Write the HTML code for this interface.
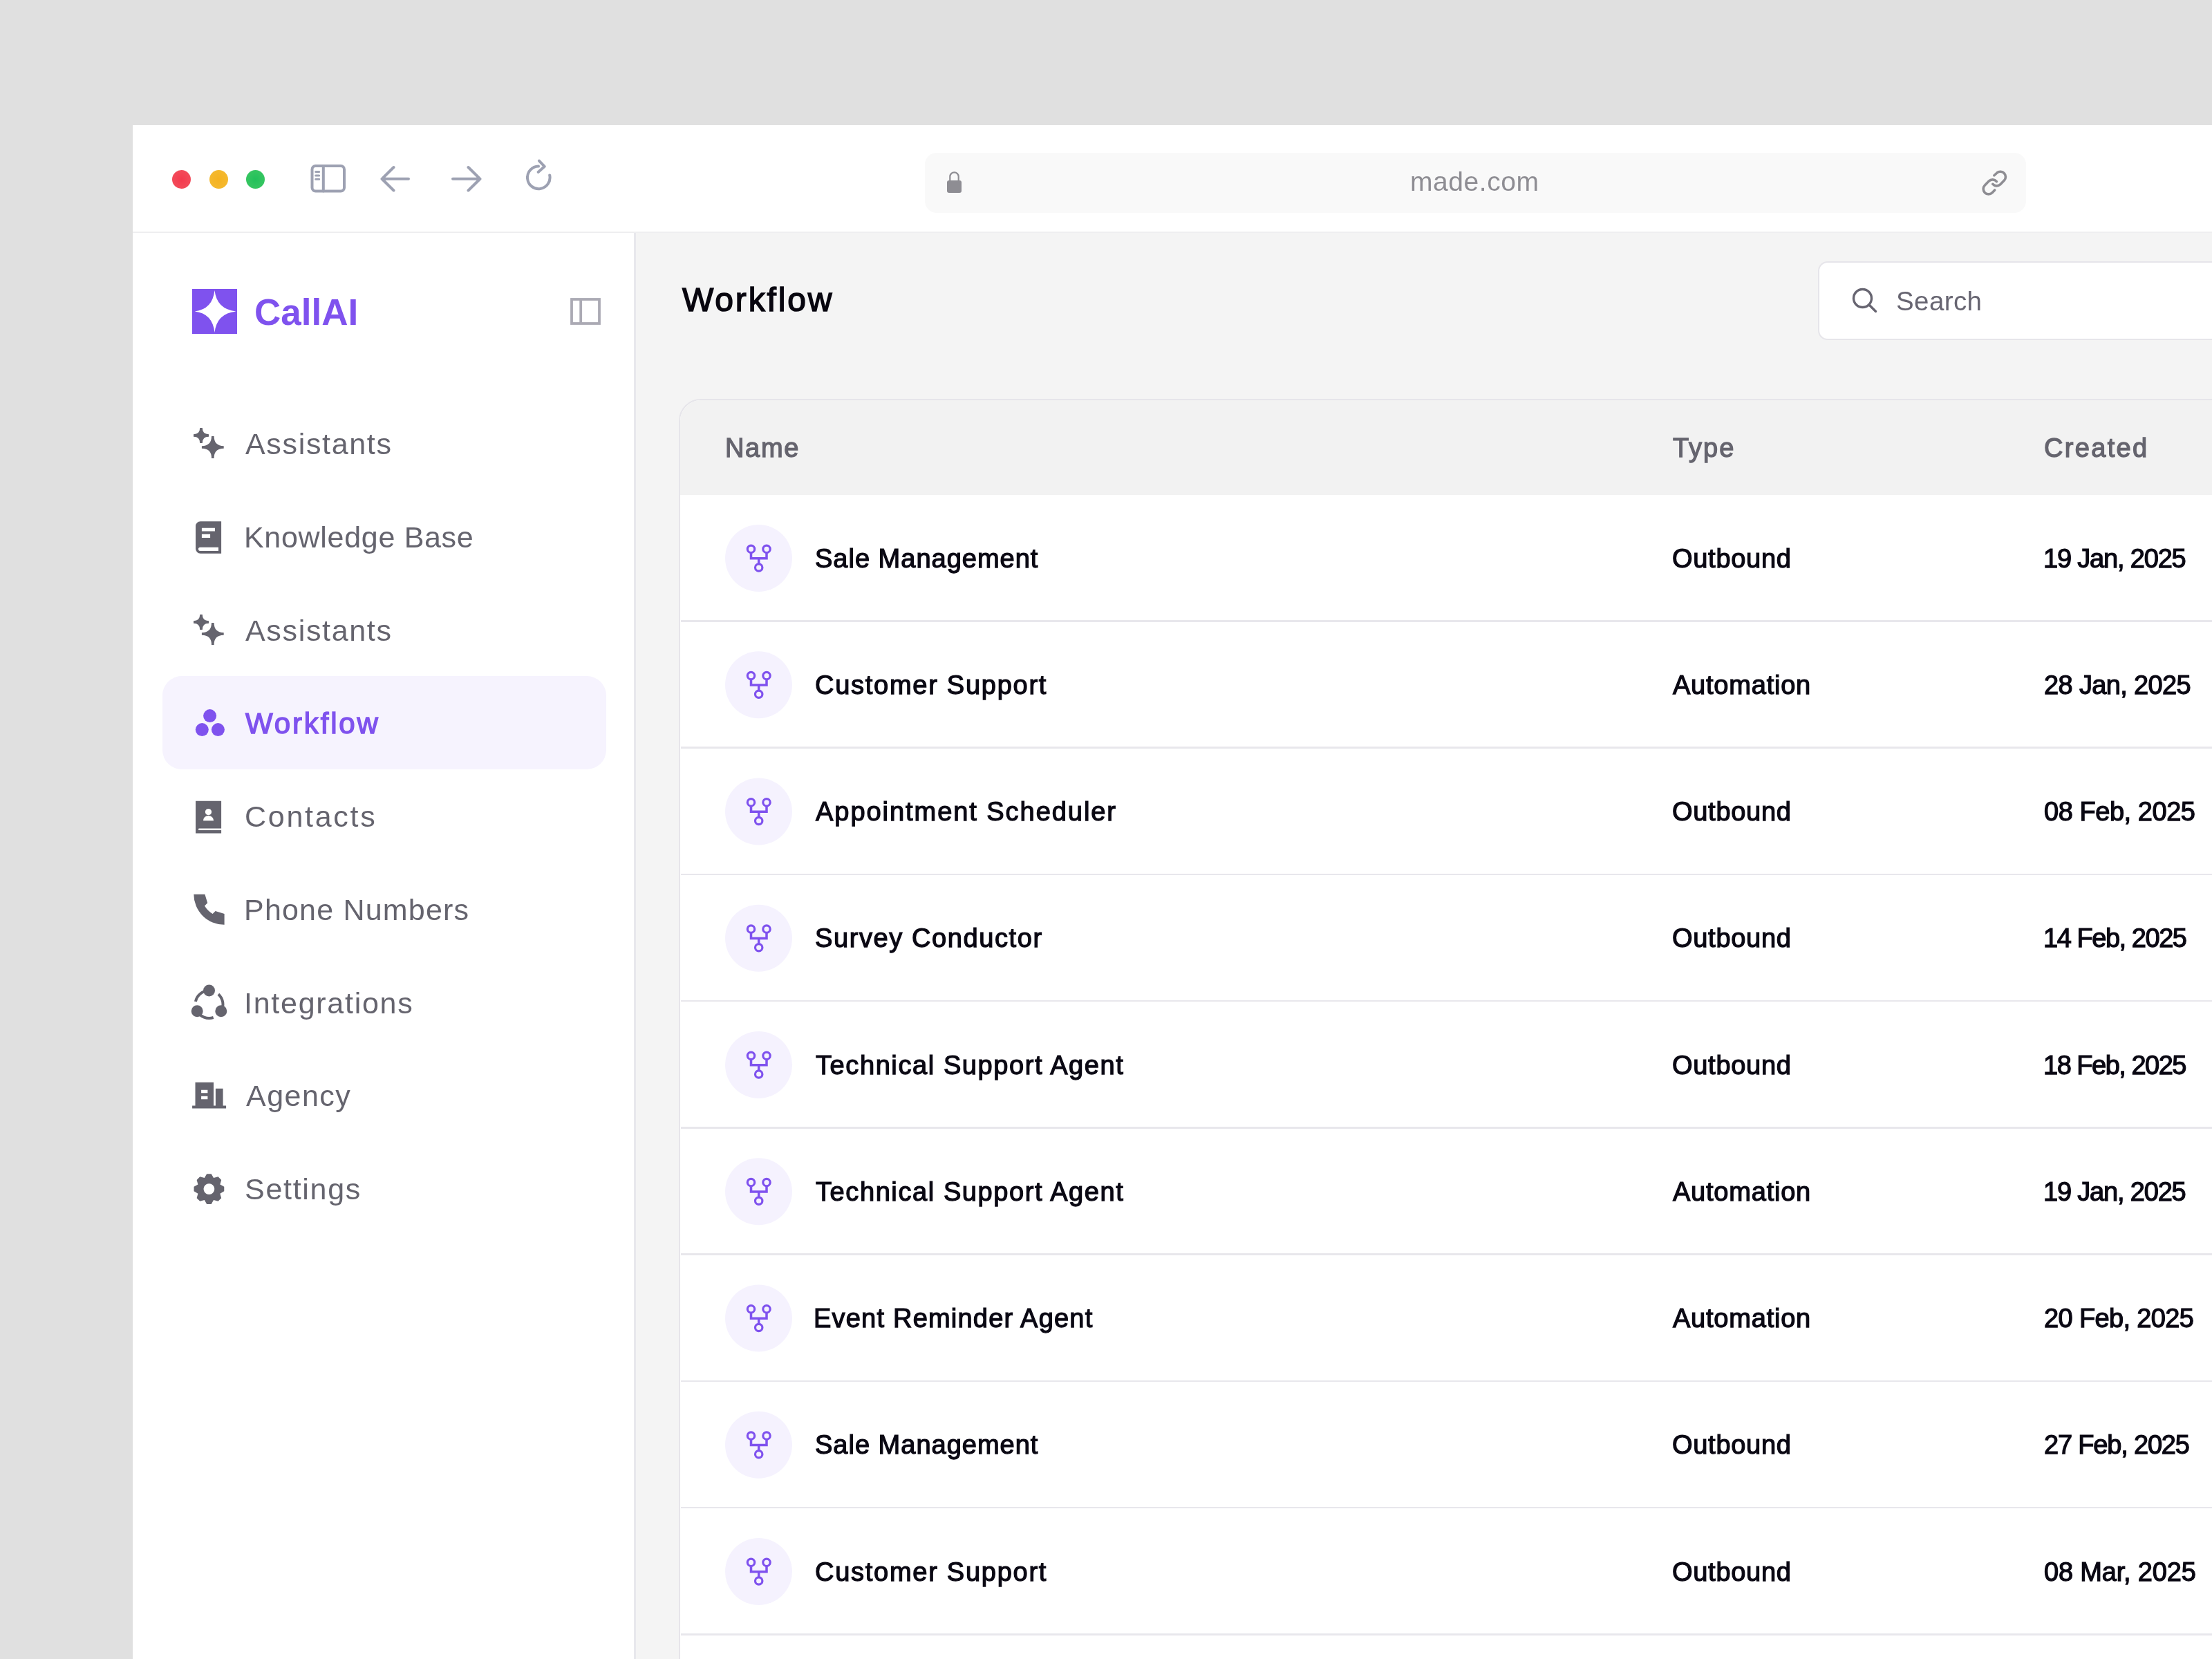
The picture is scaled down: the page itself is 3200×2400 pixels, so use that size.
<!DOCTYPE html>
<html><head><meta charset="utf-8"><style>
*{margin:0;padding:0;box-sizing:border-box}
html,body{width:3200px;height:2400px;overflow:hidden;background:#E0E0E0;font-family:"Liberation Sans", sans-serif}
.t{position:absolute;will-change:transform;white-space:nowrap;line-height:normal;font-family:"Liberation Sans", sans-serif}
.abs{position:absolute}
svg.full{position:absolute;left:0;top:0;width:3200px;height:2400px;overflow:visible}
</style></head><body>
<div class="abs" style="left:192px;top:181px;width:3008px;height:2219px;background:#fff"></div>
<div class="abs" style="left:192px;top:335px;width:3008px;height:2px;background:#EEEEF0"></div>
<div class="abs" style="left:917px;top:337px;width:2.8px;height:2063px;background:#E8E8EC"></div>
<div class="abs" style="left:919.8px;top:337px;width:2281px;height:2063px;background:#F4F4F4"></div>
<div class="abs" style="left:249px;top:245.5px;width:27px;height:27px;border-radius:50%;background:radial-gradient(circle,#F43A4E 0%,#F2525F 100%)"></div>
<div class="abs" style="left:302.5px;top:245.5px;width:27px;height:27px;border-radius:50%;background:radial-gradient(circle,#F5B220 0%,#F4BC35 100%)"></div>
<div class="abs" style="left:356px;top:245.5px;width:27px;height:27px;border-radius:50%;background:radial-gradient(circle,#22C05A 0%,#3FC864 100%)"></div>
<div class="abs" style="left:1337.5px;top:221px;width:1593.5px;height:87px;border-radius:17px;background:#F9F9F9"></div>
<div class="abs" style="left:235px;top:978px;width:642px;height:135px;border-radius:28px;background:#F6F3FE"></div>
<div class="abs" style="left:2629.8px;top:377.6px;width:700px;height:114.5px;border-radius:14px;background:#fff;border:2.5px solid #E6E5EA"></div>
<div class="abs" style="left:982px;top:577px;width:2400px;height:1900px;border-radius:32px;background:#fff;border:2.6px solid #E6E5EA;overflow:hidden">
  <div class="abs" style="left:0;top:0;width:2400px;height:137px;background:#F2F2F2"></div>
</div>
<div style="position:absolute;left:984.5px;top:897.20px;width:2300px;height:2.5px;background:#E8E7EC"></div><div style="position:absolute;left:984.5px;top:1080.45px;width:2300px;height:2.5px;background:#E8E7EC"></div><div style="position:absolute;left:984.5px;top:1263.70px;width:2300px;height:2.5px;background:#E8E7EC"></div><div style="position:absolute;left:984.5px;top:1446.95px;width:2300px;height:2.5px;background:#E8E7EC"></div><div style="position:absolute;left:984.5px;top:1630.20px;width:2300px;height:2.5px;background:#E8E7EC"></div><div style="position:absolute;left:984.5px;top:1813.45px;width:2300px;height:2.5px;background:#E8E7EC"></div><div style="position:absolute;left:984.5px;top:1996.70px;width:2300px;height:2.5px;background:#E8E7EC"></div><div style="position:absolute;left:984.5px;top:2179.95px;width:2300px;height:2.5px;background:#E8E7EC"></div><div style="position:absolute;left:984.5px;top:2363.20px;width:2300px;height:2.5px;background:#E8E7EC"></div>
<svg class="full" viewBox="0 0 3200 2400">

<g fill="none" stroke="#9DA1B2" stroke-width="4" stroke-linecap="round" stroke-linejoin="round">
<rect x="451.5" y="240" width="46.5" height="36.5" rx="5"/>
<path d="M467.8,240 V276.5"/>
<path d="M456.7,248.5 H461.7 M456.7,254 H461.7 M456.7,259.3 H461.7" stroke-width="3"/>
<path d="M591,258.8 H553.5 M569.5,242 L552.5,258.8 L569.5,275.5"/>
<path d="M655,258.8 H693.5 M677.5,242 L694.5,258.8 L677.5,275.5"/>
<path d="M795.2,253.5 A16.3 16.3 0 1 1 779,240.6"/><path d="M779.9,232.6 L787.8,240.8 L778.6,249"/>
</g>

<g fill="#8E8D93"><rect x="1370" y="261" width="21" height="18" rx="3"/></g>
<path d="M1374.3,262 V255.5 A6.2 6.2 0 0 1 1386.7,255.5 V262" fill="none" stroke="#8E8D93" stroke-width="2.2"/>
<g fill="none" stroke="#8E8D93" stroke-width="3.6" stroke-linecap="round">
<path d="M2884.9,253.8 L2889,250 A7.6 7.6 0 0 1 2899.6,260.8 L2893.6,266.9 A7.6 7.6 0 0 1 2882.8,266.3"/>
<path d="M2888.4,262.6 A7.6 7.6 0 0 0 2877.2,262.1 L2871.4,267.9 A7.6 7.6 0 0 0 2882.1,278.7 L2885.7,275"/>
</g>
<rect x="278" y="418" width="65" height="65" fill="#7F52EE"/>
<path fill="#fff" d="M310.5,420 Q313.5,447.4 341.4,450.4 Q313.5,453.4 310.5,481 Q307.5,453.4 281.7,450.4 Q307.5,447.4 310.5,420 Z"/>
<g fill="none" stroke="#ABAAB4" stroke-width="3.8"><rect x="827" y="433" width="40" height="35"/><path d="M840.2,433 V468"/></g>
<g fill="#65646E"><path d="M289.2,619 L292.8,619 Q292.8,628.2 302,628.2 L302,631.8 Q292.8,631.8 292.8,641 L289.2,641 Q289.2,631.8 280,631.8 L280,628.2 Q289.2,628.2 289.2,619 Z M306.0,631.1 L309.6,631.1 Q309.6,645.2 323.7,645.2 L323.7,648.8 Q309.6,648.8 309.6,662.9 L306.0,662.9 Q306.0,648.8 291.90000000000003,648.8 L291.90000000000003,645.2 Q306.0,645.2 306.0,631.1 Z"/><path fill-rule="evenodd" d="M290,754.3 H320.1 V800.8 H290 A7 7 0 0 1 283,793.8 V761.3 A7 7 0 0 1 290,754.3 Z M291.9,763.8 H311 V768.5 H291.9 Z M291.9,772.8 H304.1 V777.9 H291.9 Z M289.5,791.8 H316 V796.9 H289.5 A2.55 2.55 0 0 1 289.5,791.8 Z"/><path d="M289.2,889 L292.8,889 Q292.8,898.2 302,898.2 L302,901.8 Q292.8,901.8 292.8,911 L289.2,911 Q289.2,901.8 280,901.8 L280,898.2 Q289.2,898.2 289.2,889 Z M306.0,901.1 L309.6,901.1 Q309.6,915.2 323.7,915.2 L323.7,918.8 Q309.6,918.8 309.6,932.9 L306.0,932.9 Q306.0,918.8 291.90000000000003,918.8 L291.90000000000003,915.2 Q306.0,915.2 306.0,901.1 Z"/><circle cx="303.6" cy="1035.6" r="9.5" fill="#7F52EE"/><circle cx="292.3" cy="1055.6" r="9.5" fill="#7F52EE"/><circle cx="315.4" cy="1055.6" r="9.5" fill="#7F52EE"/><path fill-rule="evenodd" d="M283,1158.8 H320.1 V1198.6 H288.2 A1.25 1.25 0 0 0 288.2,1201.1 H320.1 V1205.6 H283 Z M301.5,1170 A4.6 4.6 0 1 1 301.49,1170 Z M294.1,1187.2 C294.1,1183 297.4,1180 301.5,1180 C305.6,1180 309,1183 309,1187.2 Z"/><path d="M280.3,1293.7 L296.4,1293.7 L300.2,1306.3 L296,1310.5 A33 33 0 0 0 307.6,1322 L311.6,1318.1 L324.6,1322 L324.6,1337.7 A44 44 0 0 1 280.3,1293.7 Z"/><path fill="none" stroke="#65646E" stroke-width="4" d="M302.50,1433.00 A20,20 0 0 0 282.94,1448.84 M285.06,1462.79 A20,20 0 0 0 308.68,1472.02 M319.94,1462.79 A20,20 0 0 0 315.88,1438.14"/><circle cx="302.5" cy="1433" r="8.5"/><circle cx="285.2" cy="1462.7" r="8.5"/><circle cx="319.8" cy="1462.7" r="8.5"/><path fill-rule="evenodd" d="M282.5,1565.7 H309 V1599.5 H311.9 V1574.7 H322.6 V1599.5 H327.1 V1603.6 H278.1 V1599.5 H282.5 Z M291.1,1576.7 H300.4 V1581.2 H291.1 Z M291.1,1585.7 H300.4 V1590.2 H291.1 Z"/><path fill-rule="evenodd" d="M299.13,1698.24 L305.67,1698.24 L309.02,1704.12 L315.55,1702.33 L320.17,1706.95 L318.38,1713.48 L324.26,1716.83 L324.26,1723.37 L318.38,1726.72 L320.17,1733.25 L315.55,1737.87 L309.02,1736.08 L305.67,1741.96 L299.13,1741.96 L295.78,1736.08 L289.25,1737.87 L284.63,1733.25 L286.42,1726.72 L280.54,1723.37 L280.54,1716.83 L286.42,1713.48 L284.63,1706.95 L289.25,1702.33 L295.78,1704.12 Z M310.29999999999995,1720.1 A7.9,7.9 0 1 0 294.5,1720.1 A7.9,7.9 0 1 0 310.29999999999995,1720.1 Z"/></g>
<g fill="none" stroke="#676571" stroke-width="3.4" stroke-linecap="round"><circle cx="2694.5" cy="431.5" r="13"/><path d="M2704,441 L2713.5,450.5"/></g>
<circle cx="1097.5" cy="807.5" r="48.5" fill="#F5F2FE"/><g fill="none" stroke="#7F52EE" stroke-width="3.2"><circle cx="1086.5" cy="794.3" r="5.2"/><circle cx="1109.0" cy="794.3" r="5.2"/><circle cx="1097.7" cy="821.0" r="5.2"/><path d="M1086.5,799.5 V807.8 H1109.0 V799.5 M1097.7,807.8 V815.8" stroke-linejoin="miter" stroke-width="3.5"/></g><circle cx="1097.5" cy="990.75" r="48.5" fill="#F5F2FE"/><g fill="none" stroke="#7F52EE" stroke-width="3.2"><circle cx="1086.5" cy="977.55" r="5.2"/><circle cx="1109.0" cy="977.55" r="5.2"/><circle cx="1097.7" cy="1004.25" r="5.2"/><path d="M1086.5,982.75 V991.05 H1109.0 V982.75 M1097.7,991.05 V999.05" stroke-linejoin="miter" stroke-width="3.5"/></g><circle cx="1097.5" cy="1174.0" r="48.5" fill="#F5F2FE"/><g fill="none" stroke="#7F52EE" stroke-width="3.2"><circle cx="1086.5" cy="1160.8" r="5.2"/><circle cx="1109.0" cy="1160.8" r="5.2"/><circle cx="1097.7" cy="1187.5" r="5.2"/><path d="M1086.5,1166.0 V1174.3 H1109.0 V1166.0 M1097.7,1174.3 V1182.3" stroke-linejoin="miter" stroke-width="3.5"/></g><circle cx="1097.5" cy="1357.25" r="48.5" fill="#F5F2FE"/><g fill="none" stroke="#7F52EE" stroke-width="3.2"><circle cx="1086.5" cy="1344.05" r="5.2"/><circle cx="1109.0" cy="1344.05" r="5.2"/><circle cx="1097.7" cy="1370.75" r="5.2"/><path d="M1086.5,1349.25 V1357.55 H1109.0 V1349.25 M1097.7,1357.55 V1365.55" stroke-linejoin="miter" stroke-width="3.5"/></g><circle cx="1097.5" cy="1540.5" r="48.5" fill="#F5F2FE"/><g fill="none" stroke="#7F52EE" stroke-width="3.2"><circle cx="1086.5" cy="1527.3" r="5.2"/><circle cx="1109.0" cy="1527.3" r="5.2"/><circle cx="1097.7" cy="1554.0" r="5.2"/><path d="M1086.5,1532.5 V1540.8 H1109.0 V1532.5 M1097.7,1540.8 V1548.8" stroke-linejoin="miter" stroke-width="3.5"/></g><circle cx="1097.5" cy="1723.75" r="48.5" fill="#F5F2FE"/><g fill="none" stroke="#7F52EE" stroke-width="3.2"><circle cx="1086.5" cy="1710.55" r="5.2"/><circle cx="1109.0" cy="1710.55" r="5.2"/><circle cx="1097.7" cy="1737.25" r="5.2"/><path d="M1086.5,1715.75 V1724.05 H1109.0 V1715.75 M1097.7,1724.05 V1732.05" stroke-linejoin="miter" stroke-width="3.5"/></g><circle cx="1097.5" cy="1907.0" r="48.5" fill="#F5F2FE"/><g fill="none" stroke="#7F52EE" stroke-width="3.2"><circle cx="1086.5" cy="1893.8" r="5.2"/><circle cx="1109.0" cy="1893.8" r="5.2"/><circle cx="1097.7" cy="1920.5" r="5.2"/><path d="M1086.5,1899.0 V1907.3 H1109.0 V1899.0 M1097.7,1907.3 V1915.3" stroke-linejoin="miter" stroke-width="3.5"/></g><circle cx="1097.5" cy="2090.25" r="48.5" fill="#F5F2FE"/><g fill="none" stroke="#7F52EE" stroke-width="3.2"><circle cx="1086.5" cy="2077.05" r="5.2"/><circle cx="1109.0" cy="2077.05" r="5.2"/><circle cx="1097.7" cy="2103.75" r="5.2"/><path d="M1086.5,2082.25 V2090.55 H1109.0 V2082.25 M1097.7,2090.55 V2098.55" stroke-linejoin="miter" stroke-width="3.5"/></g><circle cx="1097.5" cy="2273.5" r="48.5" fill="#F5F2FE"/><g fill="none" stroke="#7F52EE" stroke-width="3.2"><circle cx="1086.5" cy="2260.3" r="5.2"/><circle cx="1109.0" cy="2260.3" r="5.2"/><circle cx="1097.7" cy="2287.0" r="5.2"/><path d="M1086.5,2265.5 V2273.8 H1109.0 V2265.5 M1097.7,2273.8 V2281.8" stroke-linejoin="miter" stroke-width="3.5"/></g>
</svg>
<div class="t" id="t0" style="left:2040.00px;top:241.00px;font-size:39px;font-weight:400;color:#8E8D93;letter-spacing:0.571px;">made.com</div><div class="t" id="t1" style="left:368.00px;top:420.71px;font-size:53px;font-weight:700;color:#7F52EE;letter-spacing:0.000px;">CallAI</div><div class="t" id="t2" style="left:355.00px;top:618.01px;font-size:43px;font-weight:400;color:#65646E;letter-spacing:1.667px;">Assistants</div><div class="t" id="t3" style="left:352.50px;top:752.76px;font-size:43px;font-weight:400;color:#65646E;letter-spacing:0.692px;">Knowledge Base</div><div class="t" id="t4" style="left:355.00px;top:887.51px;font-size:43px;font-weight:400;color:#65646E;letter-spacing:1.667px;">Assistants</div><div class="t" id="t5" style="left:355.00px;top:1023.26px;font-size:42px;font-weight:400;color:#7F52EE;letter-spacing:2.857px;-webkit-text-stroke:1.4px #7F52EE;">Workflow</div><div class="t" id="t6" style="left:353.50px;top:1157.01px;font-size:43px;font-weight:400;color:#65646E;letter-spacing:2.714px;">Contacts</div><div class="t" id="t7" style="left:352.50px;top:1291.76px;font-size:43px;font-weight:400;color:#65646E;letter-spacing:1.200px;">Phone Numbers</div><div class="t" id="t8" style="left:352.50px;top:1426.51px;font-size:43px;font-weight:400;color:#65646E;letter-spacing:1.727px;">Integrations</div><div class="t" id="t9" style="left:355.50px;top:1561.26px;font-size:43px;font-weight:400;color:#65646E;letter-spacing:1.480px;">Agency</div><div class="t" id="t10" style="left:353.50px;top:1696.01px;font-size:43px;font-weight:400;color:#65646E;letter-spacing:1.714px;">Settings</div><div class="t" id="t11" style="left:987.00px;top:406.01px;font-size:48px;font-weight:400;color:#08060F;letter-spacing:2.857px;-webkit-text-stroke:1.5px #08060F;">Workflow</div><div class="t" id="t12" style="left:2743.00px;top:413.71px;font-size:38.5px;font-weight:400;color:#676571;letter-spacing:0.400px;">Search</div><div class="t" id="t13" style="left:1048.50px;top:627.00px;font-size:38px;font-weight:400;color:#65646E;letter-spacing:1.667px;-webkit-text-stroke:1.3px #65646E;">Name</div><div class="t" id="t14" style="left:2420.00px;top:627.00px;font-size:38px;font-weight:400;color:#65646E;letter-spacing:2.000px;-webkit-text-stroke:1.3px #65646E;">Type</div><div class="t" id="t15" style="left:2957.00px;top:627.00px;font-size:38px;font-weight:400;color:#65646E;letter-spacing:2.333px;-webkit-text-stroke:1.3px #65646E;">Created</div><div class="t" id="t16" style="left:1179.00px;top:786.71px;font-size:38px;font-weight:400;color:#0A0813;letter-spacing:1.000px;-webkit-text-stroke:1.25px #0A0813;">Sale Management</div><div class="t" id="t17" style="left:2419.00px;top:786.71px;font-size:38px;font-weight:400;color:#0A0813;letter-spacing:0.714px;-webkit-text-stroke:1.25px #0A0813;">Outbound</div><div class="t" id="t18" style="left:2956.00px;top:786.71px;font-size:38px;font-weight:400;color:#0A0813;letter-spacing:-1.182px;-webkit-text-stroke:1.25px #0A0813;">19 Jan, 2025</div><div class="t" id="t19" style="left:1179.00px;top:969.96px;font-size:38px;font-weight:400;color:#0A0813;letter-spacing:1.733px;-webkit-text-stroke:1.25px #0A0813;">Customer Support</div><div class="t" id="t20" style="left:2420.00px;top:969.96px;font-size:38px;font-weight:400;color:#0A0813;letter-spacing:0.778px;-webkit-text-stroke:1.25px #0A0813;">Automation</div><div class="t" id="t21" style="left:2957.00px;top:969.96px;font-size:38px;font-weight:400;color:#0A0813;letter-spacing:-0.636px;-webkit-text-stroke:1.25px #0A0813;">28 Jan, 2025</div><div class="t" id="t22" style="left:1180.00px;top:1153.21px;font-size:38px;font-weight:400;color:#0A0813;letter-spacing:1.950px;-webkit-text-stroke:1.25px #0A0813;">Appointment Scheduler</div><div class="t" id="t23" style="left:2419.00px;top:1153.21px;font-size:38px;font-weight:400;color:#0A0813;letter-spacing:0.714px;-webkit-text-stroke:1.25px #0A0813;">Outbound</div><div class="t" id="t24" style="left:2957.00px;top:1153.21px;font-size:38px;font-weight:400;color:#0A0813;letter-spacing:-0.455px;-webkit-text-stroke:1.25px #0A0813;">08 Feb, 2025</div><div class="t" id="t25" style="left:1179.00px;top:1336.46px;font-size:38px;font-weight:400;color:#0A0813;letter-spacing:1.600px;-webkit-text-stroke:1.25px #0A0813;">Survey Conductor</div><div class="t" id="t26" style="left:2419.00px;top:1336.46px;font-size:38px;font-weight:400;color:#0A0813;letter-spacing:0.714px;-webkit-text-stroke:1.25px #0A0813;">Outbound</div><div class="t" id="t27" style="left:2956.00px;top:1336.46px;font-size:38px;font-weight:400;color:#0A0813;letter-spacing:-1.455px;-webkit-text-stroke:1.25px #0A0813;">14 Feb, 2025</div><div class="t" id="t28" style="left:1180.00px;top:1519.71px;font-size:38px;font-weight:400;color:#0A0813;letter-spacing:1.591px;-webkit-text-stroke:1.25px #0A0813;">Technical Support Agent</div><div class="t" id="t29" style="left:2419.00px;top:1519.71px;font-size:38px;font-weight:400;color:#0A0813;letter-spacing:0.714px;-webkit-text-stroke:1.25px #0A0813;">Outbound</div><div class="t" id="t30" style="left:2956.00px;top:1519.71px;font-size:38px;font-weight:400;color:#0A0813;letter-spacing:-1.500px;-webkit-text-stroke:1.25px #0A0813;">18 Feb, 2025</div><div class="t" id="t31" style="left:1180.00px;top:1702.96px;font-size:38px;font-weight:400;color:#0A0813;letter-spacing:1.591px;-webkit-text-stroke:1.25px #0A0813;">Technical Support Agent</div><div class="t" id="t32" style="left:2420.00px;top:1702.96px;font-size:38px;font-weight:400;color:#0A0813;letter-spacing:0.778px;-webkit-text-stroke:1.25px #0A0813;">Automation</div><div class="t" id="t33" style="left:2956.00px;top:1702.96px;font-size:38px;font-weight:400;color:#0A0813;letter-spacing:-1.182px;-webkit-text-stroke:1.25px #0A0813;">19 Jan, 2025</div><div class="t" id="t34" style="left:1177.00px;top:1886.21px;font-size:38px;font-weight:400;color:#0A0813;letter-spacing:1.211px;-webkit-text-stroke:1.25px #0A0813;">Event Reminder Agent</div><div class="t" id="t35" style="left:2420.00px;top:1886.21px;font-size:38px;font-weight:400;color:#0A0813;letter-spacing:0.778px;-webkit-text-stroke:1.25px #0A0813;">Automation</div><div class="t" id="t36" style="left:2957.00px;top:1886.21px;font-size:38px;font-weight:400;color:#0A0813;letter-spacing:-0.636px;-webkit-text-stroke:1.25px #0A0813;">20 Feb, 2025</div><div class="t" id="t37" style="left:1179.00px;top:2069.46px;font-size:38px;font-weight:400;color:#0A0813;letter-spacing:1.000px;-webkit-text-stroke:1.25px #0A0813;">Sale Management</div><div class="t" id="t38" style="left:2419.00px;top:2069.46px;font-size:38px;font-weight:400;color:#0A0813;letter-spacing:0.714px;-webkit-text-stroke:1.25px #0A0813;">Outbound</div><div class="t" id="t39" style="left:2957.00px;top:2069.46px;font-size:38px;font-weight:400;color:#0A0813;letter-spacing:-1.182px;-webkit-text-stroke:1.25px #0A0813;">27 Feb, 2025</div><div class="t" id="t40" style="left:1179.00px;top:2252.71px;font-size:38px;font-weight:400;color:#0A0813;letter-spacing:1.733px;-webkit-text-stroke:1.25px #0A0813;">Customer Support</div><div class="t" id="t41" style="left:2419.00px;top:2252.71px;font-size:38px;font-weight:400;color:#0A0813;letter-spacing:0.714px;-webkit-text-stroke:1.25px #0A0813;">Outbound</div><div class="t" id="t42" style="left:2957.00px;top:2252.71px;font-size:38px;font-weight:400;color:#0A0813;letter-spacing:-0.182px;-webkit-text-stroke:1.25px #0A0813;">08 Mar, 2025</div>
</body></html>
